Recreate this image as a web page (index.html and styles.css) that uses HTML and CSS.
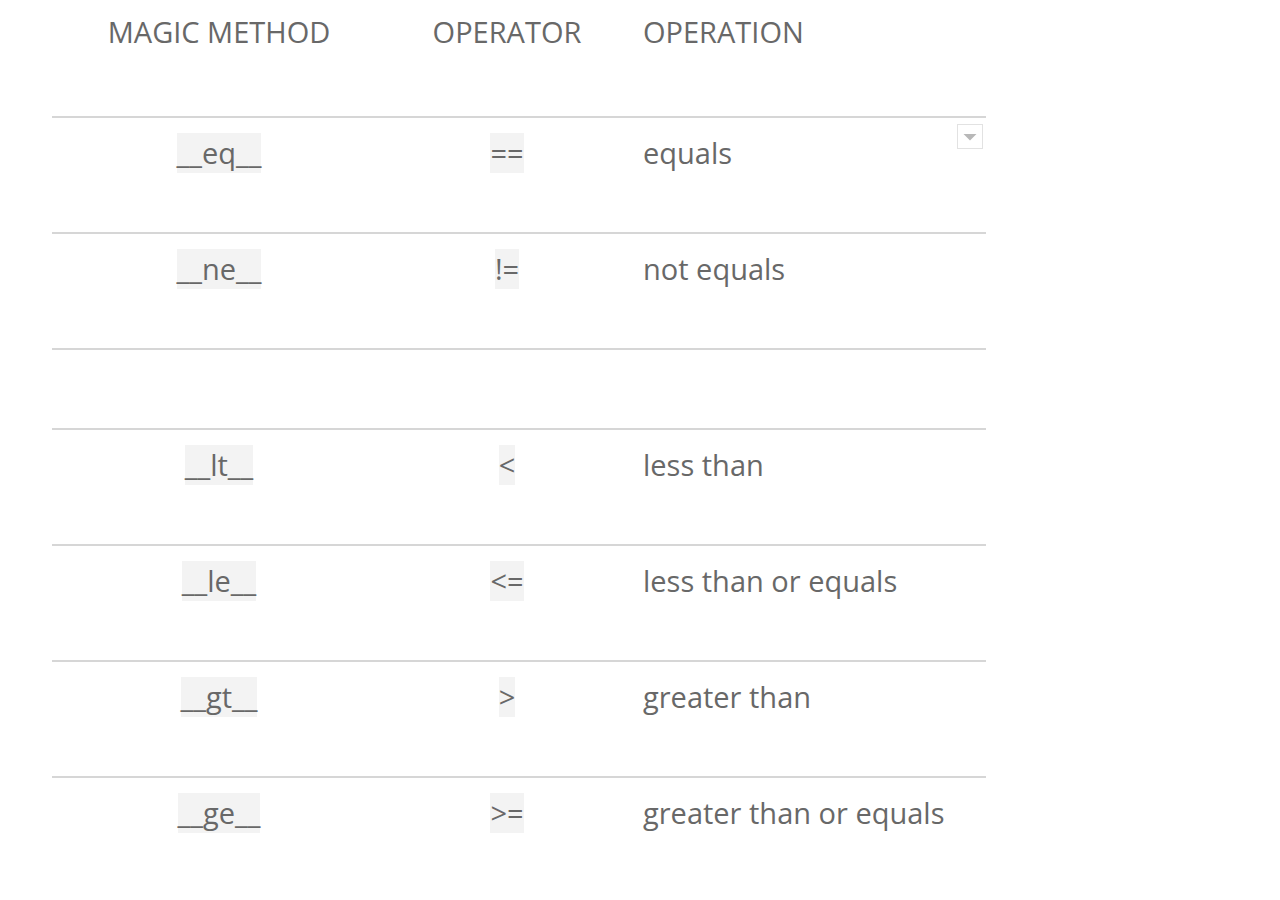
FILE: index.html
```html
<!DOCTYPE html>
<html>
<head>
<meta charset="utf-8">
<link rel="stylesheet" href="styles.css">
</head>
<body>
<table class="ops">
  <colgroup>
    <col class="c1"><col class="c2"><col class="c3">
  </colgroup>
  <thead>
    <tr>
      <th class="center">MAGIC METHOD</th>
      <th class="center">OPERATOR</th>
      <th class="left">OPERATION</th>
    </tr>
  </thead>
  <tbody>
    <tr>
      <td class="center"><code>__eq__</code></td>
      <td class="center"><code>==</code></td>
      <td class="left menu-cell">equals<span class="dropdown"><svg width="14" height="9" viewBox="0 0 14 9"><path d="M0.5 2 L13.5 2 L7 8.5 Z" fill="#b8b8b8"/></svg></span></td>
    </tr>
    <tr>
      <td class="center"><code>__ne__</code></td>
      <td class="center"><code>!=</code></td>
      <td class="left">not equals</td>
    </tr>
    <tr class="empty">
      <td></td><td></td><td></td>
    </tr>
    <tr>
      <td class="center"><code>__lt__</code></td>
      <td class="center"><code>&lt;</code></td>
      <td class="left">less than</td>
    </tr>
    <tr>
      <td class="center"><code>__le__</code></td>
      <td class="center"><code>&lt;=</code></td>
      <td class="left">less than or equals</td>
    </tr>
    <tr>
      <td class="center"><code>__gt__</code></td>
      <td class="center"><code>&gt;</code></td>
      <td class="left">greater than</td>
    </tr>
    <tr>
      <td class="center"><code>__ge__</code></td>
      <td class="center"><code>&gt;=</code></td>
      <td class="left">greater than or equals</td>
    </tr>
  </tbody>
</table>
</body>
</html>
```

FILE: styles.css
```css
html, body {
  margin: 0;
  padding: 0;
  background: #ffffff;
}
body {
  font-family: "Open Sans", "Liberation Sans", sans-serif;
  font-size: 29px;
  line-height: 40px;
  color: #686868;
}
.ops {
  border-collapse: collapse;
  table-layout: fixed;
  width: 934px;
  margin-left: 52px;
}
.c1 { width: 334px; }
.c2 { width: 242px; }
.c3 { width: 358px; }
.ops th {
  font-weight: 400;
  height: 117px;
  padding: 12px 0 0 0;
  vertical-align: top;
  box-sizing: border-box;
  border-bottom: 2px solid #d6d6d6;
}
.ops td {
  height: 116px;
  padding: 15px 0 0 0;
  vertical-align: top;
  box-sizing: border-box;
  border-bottom: 2px solid #d6d6d6;
}
.ops tr.empty td {
  height: 80px;
}
.ops tbody tr:last-child td {
  border-bottom: none;
}
.center { text-align: center; }
.left { text-align: left; padding-left: 15px !important; }
code {
  font-family: "Open Sans", "Liberation Sans", sans-serif;
  font-size: 29px;
  display: inline-block;
  line-height: 40px;
  background: #f3f3f3;
  padding: 0;
}
.menu-cell {
  position: relative;
}
.dropdown {
  position: absolute;
  top: 6px;
  right: 3px;
  width: 24px;
  height: 23px;
  border: 1px solid #e2e2e2;
  display: flex;
  align-items: center;
  justify-content: center;
  background: #fff;
}
.dropdown svg { display: block; }
```
